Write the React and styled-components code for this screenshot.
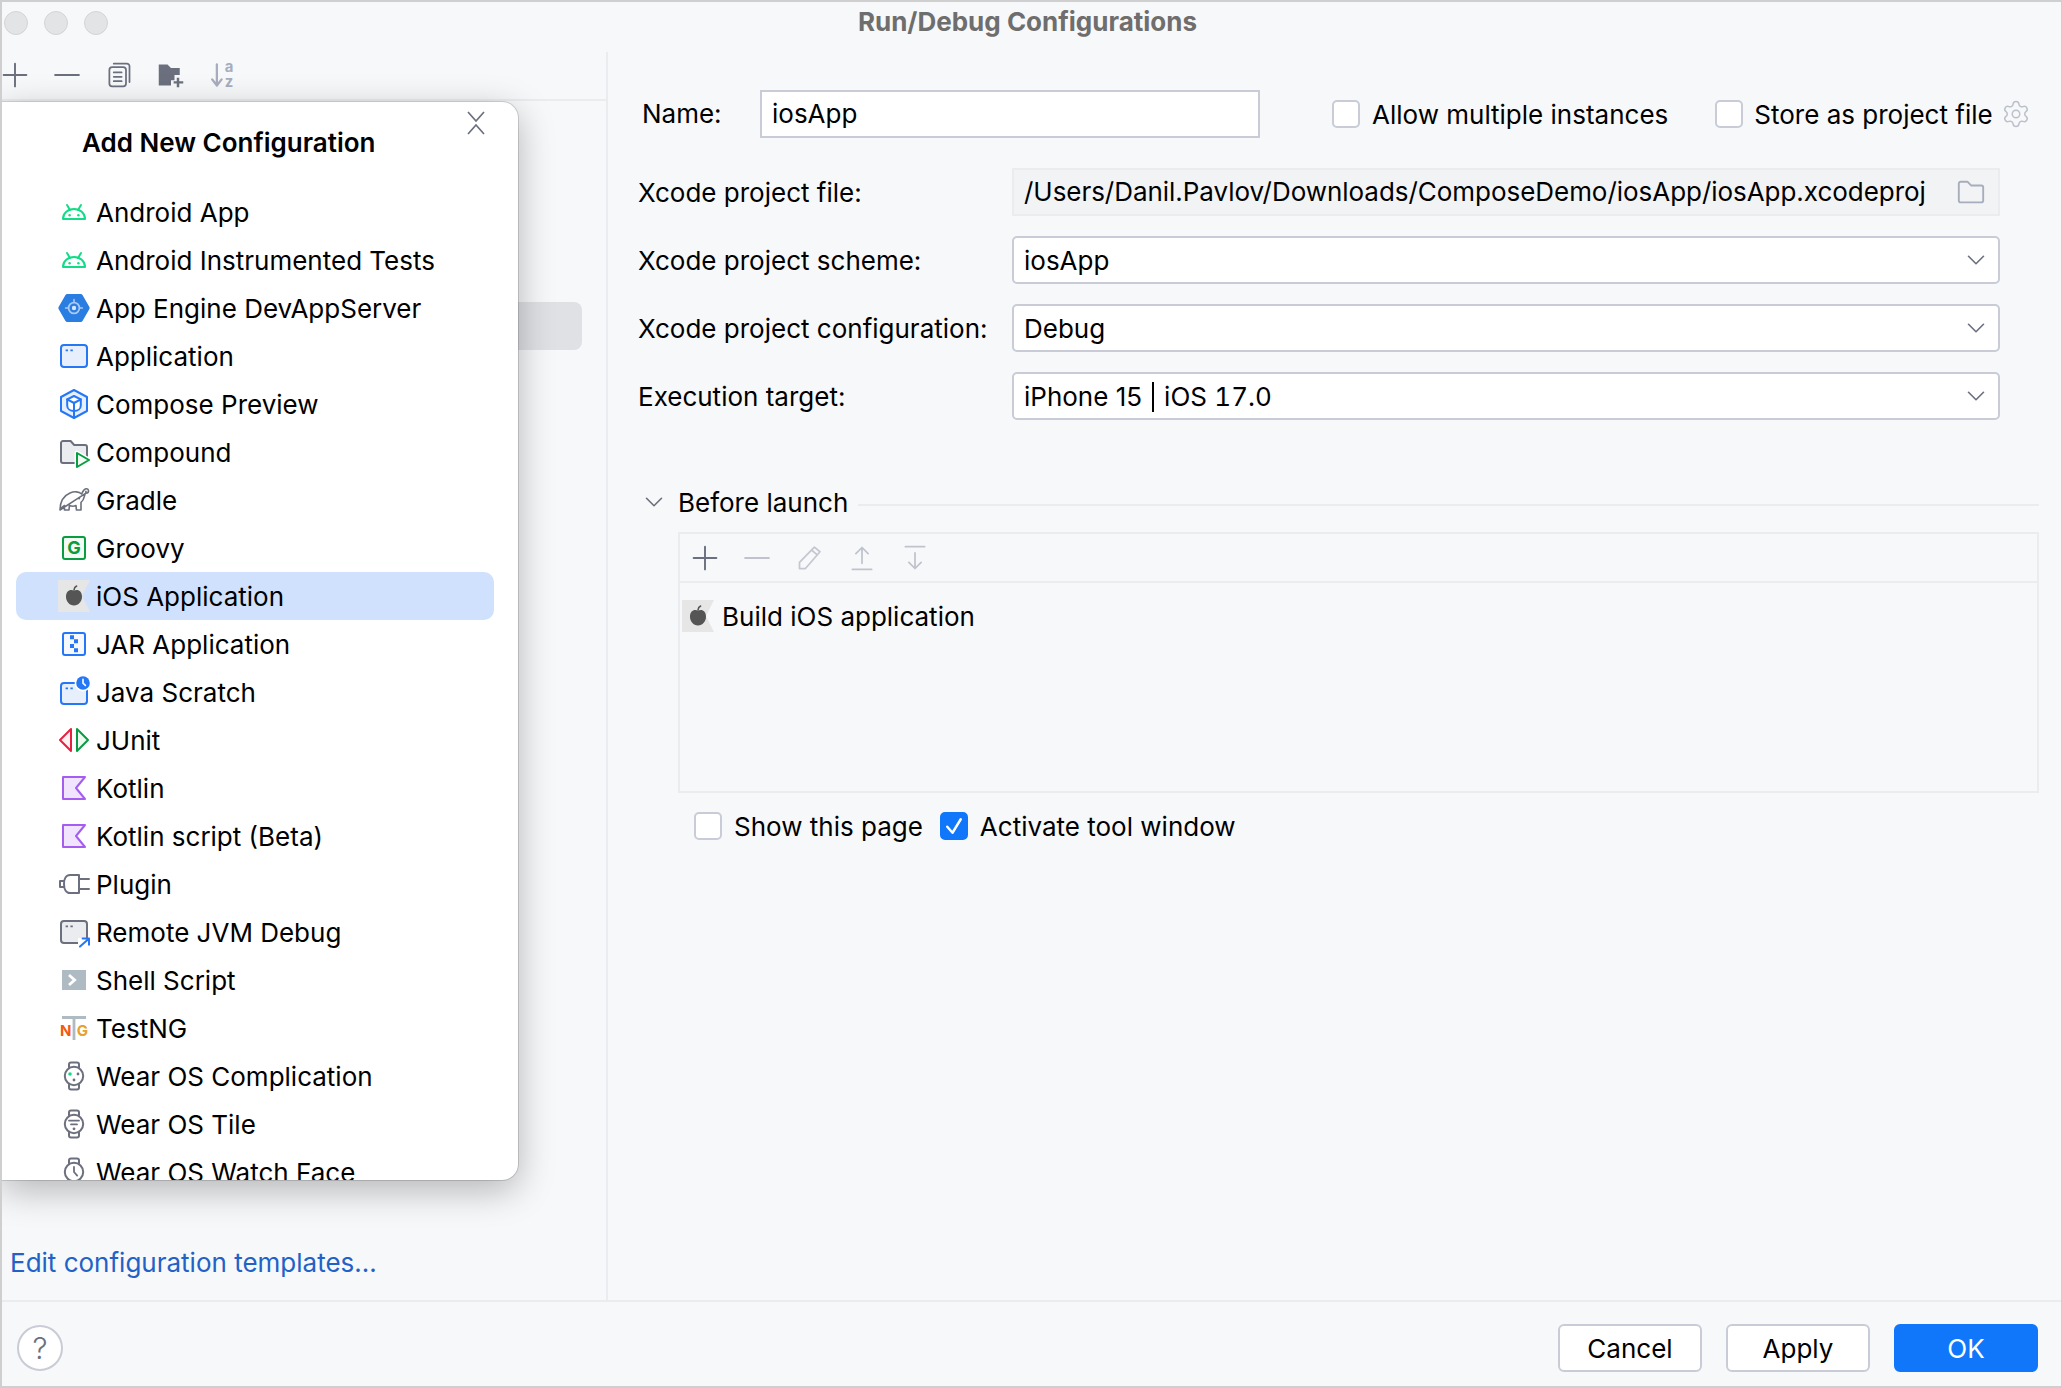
import React from 'react';
import styled, { createGlobalStyle } from 'styled-components';
import { Settings } from 'lucide-react';

const GlobalStyle = createGlobalStyle`
  html, body { margin: 0; padding: 0; background: #f7f8fa; }
  * { box-sizing: border-box; }
  body { font-family: Inter, "Noto Sans", sans-serif; font-size: 26px; color: #000; }
`;

const GRAY = '#6c707e';
const LIGHT = '#a8adbd';
const BLUE = '#2677f5';
const BLUE_FILL = '#e7effd';
const GREEN = '#0a9c43';
const PURPLE = '#a55df0';
const LINE = '#ebecf0';

const Window = styled.div`
  position: relative;
  width: 2062px;
  height: 1388px;
  display: flex;
  flex-direction: column;
  overflow: hidden;
  background: #f7f8fa;
  border: 2px solid #cfcfcf;
  border-right-width: 1px;
`;

const TitleBar = styled.div`
  flex: none;
  height: 40px;
  display: grid;
  grid-template-columns: 1fr auto 1fr;
  align-items: center;
  padding: 0 2px;
`;

const Lights = styled.div`
  display: flex;
  gap: 16px;
  margin-top: 2px;
`;

const Light = styled.span`
  width: 24px;
  height: 24px;
  border-radius: 50%;
  background: #e3e4e6;
  border: 1px solid #d3d4d6;
`;

const WindowTitle = styled.div`
  font-size: 26px;
  font-weight: 700;
  color: #6e6e6e;
  margin-top: -1px;
  margin-right: 8px;
`;

const Body = styled.div`
  flex: 1;
  display: flex;
  min-height: 0;
  padding-top: 10px;
`;

const Sidebar = styled.div`
  flex: none;
  width: 606px;
  display: flex;
  flex-direction: column;
  border-right: 2px solid ${LINE};
`;

const Toolbar = styled.div`
  flex: none;
  display: flex;
  align-items: center;
  gap: ${p => p.$gap || 24}px;
  height: 48px;
`;

const SideToolbar = styled(Toolbar)`
  height: 49px;
  border-bottom: 2px solid ${LINE};
  margin-left: -2px;
  padding: 0 0 1px 0.5px;
`;

const Tree = styled.div`
  flex: 1;
  padding: 201px 24px 0 0;
`;

const TreeSelection = styled.div`
  height: 48px;
  border-radius: 8px;
  background: #dfe1e5;
`;

const EditLink = styled.a`
  flex: none;
  display: block;
  padding: 0 0 21px 8px;
  color: #2261c6;
  line-height: 32px;
`;

const Popup = styled.div`
  position: absolute;
  z-index: 5;
  left: 0;
  top: 100px;
  width: 516px;
  height: 1078px;
  overflow: hidden;
  display: flex;
  flex-direction: column;
  background: #fff;
  border-radius: 0 16px 16px 0;
  box-shadow: 0 0 0 1px rgba(0, 0, 0, 0.14), 0 10px 36px rgba(0, 0, 0, 0.28);
`;

const PopupHeader = styled.div`
  flex: none;
  height: 86px;
  display: flex;
  justify-content: space-between;
  align-items: flex-start;
  padding: 8px 28px 0 80px;
`;

const PopupTitle = styled.div`
  font-size: 26px;
  font-weight: 600;
  line-height: 32px;
  margin-top: 17px;
`;

const ConfigList = styled.div`
  flex: 1;
  min-height: 0;
  padding: 0 24px 0 14px;
`;

const ConfigRow = styled.div`
  height: 48px;
  display: flex;
  align-items: center;
  gap: 6px;
  padding-left: 42px;
  border-radius: 10px;
  white-space: nowrap;
  background: ${p => (p.$selected ? '#d0e1fd' : 'transparent')};
`;

const Main = styled.div`
  flex: 1;
  min-width: 0;
  padding: 38px 22px 0 30px;
`;

const NameRow = styled.div`
  display: flex;
  align-items: center;
  height: 48px;
`;

const NameLabel = styled.label`
  width: 118px;
  margin-left: 4px;
  padding-bottom: 2px;
`;

const NameInput = styled.div`
  width: 500px;
  height: 48px;
  display: flex;
  align-items: center;
  padding: 0 0 2px 10px;
  background: #fff;
  border: 2px solid #c9ccd6;
`;

const CheckLine = styled.label`
  display: flex;
  align-items: center;
  gap: ${p => p.$gap || 12}px;
  margin-left: ${p => p.$left || 0}px;
  white-space: nowrap;
`;

const Box = styled.span`
  flex: none;
  width: 28px;
  height: 28px;
  display: flex;
  align-items: center;
  justify-content: center;
  border-radius: 5px;
  background: ${p => (p.$checked ? '#1077fb' : '#fff')};
  border: 2px solid ${p => (p.$checked ? '#1077fb' : '#c9ccd6')};
`;

const FieldGrid = styled.div`
  display: grid;
  grid-template-columns: 374px 988px;
  row-gap: 20px;
  align-items: center;
  margin-top: 30px;
`;

const Field = styled.div`
  height: 48px;
  display: flex;
  align-items: center;
  justify-content: space-between;
  padding: 0 12px 0 10px;
  white-space: nowrap;
  background: ${p => (p.$disabled ? '#f2f3f5' : '#fff')};
  border: 2px solid ${p => (p.$disabled ? LINE : '#c9ccd6')};
  border-radius: ${p => (p.$disabled ? 0 : 5)}px;
`;

const PathText = styled.span`
  margin-top: -2px;
  letter-spacing: -0.04px;
`;

const Version = styled.span`
  font-variant-numeric: tabular-nums;
`;

const Pipe = styled.span`
  display: inline-block;
  width: 2px;
  height: 30px;
  margin: 0 10px;
  background: #000;
  vertical-align: -6px;
`;

const SectionHead = styled.div`
  display: flex;
  align-items: center;
  height: 30px;
  margin-top: 67px;
  margin-left: 6px;
`;

const SectionLabel = styled.span`
  margin-left: 14px;
  margin-right: 10px;
  white-space: nowrap;
`;

const SectionLine = styled.span`
  flex: 1;
  height: 2px;
  margin-top: 6px;
  background: ${LINE};
`;

const TaskBox = styled.div`
  height: 261px;
  margin: 15px 0 0 40px;
  border: 2px solid ${LINE};
`;

const TaskBar = styled(Toolbar)`
  height: 49px;
  padding-left: 11px;
  border-bottom: 2px solid ${LINE};
`;

const TaskRow = styled.div`
  display: flex;
  align-items: center;
  gap: 8px;
  height: 48px;
  margin-top: 9px;
  padding-left: 2px;
`;

const OptionRow = styled.div`
  display: flex;
  align-items: center;
  margin: 19px 0 0 56px;
  height: 28px;
`;

const Footer = styled.div`
  flex: none;
  height: 86px;
  display: flex;
  align-items: center;
  justify-content: space-between;
  padding: 8px 23px 0 15px;
  border-top: 2px solid ${LINE};
`;

const HelpButton = styled.div`
  width: 46px;
  height: 46px;
  display: flex;
  align-items: center;
  justify-content: center;
  border-radius: 50%;
  font-size: 30px;
  font-weight: 300;
  color: ${GRAY};
  background: #fff;
  border: 2px solid #c9ccd6;
`;

const Buttons = styled.div`
  display: flex;
  gap: 24px;
`;

const Button = styled.button`
  width: 144px;
  height: 48px;
  padding: 0;
  font: inherit;
  color: ${p => (p.$primary ? '#fff' : '#000')};
  background: ${p => (p.$primary ? '#1077fb' : '#fff')};
  border: 2px solid ${p => (p.$primary ? '#1077fb' : '#c9ccd6')};
  border-radius: 6px;
`;

const Svg = styled.svg`
  flex: none;
  display: block;
  overflow: visible;
  width: ${p => p.$size || 32}px;
  height: ${p => p.$size || 32}px;
`;

const Icon = ({ size, children }) => (
  <Svg $size={size} viewBox="0 0 16 16" fill="none" strokeLinecap="round" strokeLinejoin="round">
    {children}
  </Svg>
);

const Plus = ({ color = GRAY }) => (
  <Icon size={28}>
    <path d="M8 1.500v13M1.500 8h13" stroke={color} strokeWidth="1.100" />
  </Icon>
);
const Minus = ({ color = GRAY }) => (
  <Icon size={28}>
    <path d="M1.200 8h13.600" stroke={color} strokeWidth="1.100" />
  </Icon>
);
const Copy = () => (
  <Icon size={28}>
    <rect x="2.500" y="3.500" width="9.500" height="11" rx="1.600" stroke={GRAY} strokeWidth="1" />
    <path d="M5 1.500h7.500A1.500 1.500 0 0 1 14 3v9" stroke={GRAY} strokeWidth="1" />
    <path d="M5 6.500h4.500M5 9h4.500M5 11.500h4.500" stroke={GRAY} strokeWidth="1" />
  </Icon>
);
const FolderAdd = () => (
  <Icon size={28}>
    <path d="M1 2h5l2 2h5v4H10v3H8v3H1z" fill={GRAY} />
    <path d="M12 9.500v5.500M9.500 12.200h5.500" stroke={GRAY} strokeWidth="1.400" strokeLinecap="butt" />
  </Icon>
);
const Sort = () => (
  <Icon size={28}>
    <path d="M4.500 2v11M1.800 10.500 4.500 14l2.700-3.500" stroke={LIGHT} strokeWidth="1.300" />
    <text x="9" y="6.500" fontFamily="Inter, sans-serif" fontSize="8.500" fontWeight="700" fill={LIGHT}>a</text>
    <text x="9" y="15" fontFamily="Inter, sans-serif" fontSize="8.500" fontWeight="700" fill={LIGHT}>z</text>
  </Icon>
);
const Pencil = () => (
  <Icon size={28}>
    <path d="M2 14v-3.500L10.500 1.800l3.200 2.600L5.400 14zM9 3.600l3.200 2.600" stroke="#c4c7d0" strokeWidth="1" />
  </Icon>
);
const MoveUp = () => (
  <Icon size={28}>
    <path d="M8 2v9M4.500 5.500 8 2l3.500 3.500M2.500 14.500h11" stroke="#c0c3cc" strokeWidth="1" />
  </Icon>
);
const MoveDown = () => (
  <Icon size={28}>
    <path d="M8 5v9M4.500 10.500 8 14l3.500-3.500M2.500 1.500h11" stroke="#c0c3cc" strokeWidth="1" />
  </Icon>
);
const Chevron = ({ size = 20, color = GRAY }) => (
  <Icon size={size}>
    <path d="M2 5l6 6 6-6" stroke={color} strokeWidth="1.300" />
  </Icon>
);
const CloseChevrons = () => (
  <Svg $size={28} viewBox="0 0 28 28" fill="none">
    <path d="M6 2l8 9 8-9M6 24l8-9 8 9" stroke={GRAY} strokeWidth="1.700" />
  </Svg>
);
const Folder = () => (
  <Icon size={30}>
    <path d="M1.500 3.500a1 1 0 0 1 1-1h3.600l1.900 2h5.500a1 1 0 0 1 1 1v7a1 1 0 0 1-1 1h-11a1 1 0 0 1-1-1z" stroke={LIGHT} strokeWidth="1" fill="#f2f3f5" />
  </Icon>
);
const Check = () => (
  <Icon size={24}>
    <path d="M3.500 8.500 7 12.500l5.500-9" stroke="#fff" strokeWidth="1.600" />
  </Icon>
);

const Android = () => (
  <Icon>
    <path d="M2.500 11.500h11C13.500 8.500 11 6.500 8 6.500s-5.500 2-5.500 5z" stroke="#12dc85" strokeWidth="1" />
    <path d="M4.500 4.500 6 7M11.500 4.500 10 7" stroke="#12dc85" strokeWidth="1" />
    <circle cx="5.800" cy="9.600" r=".6" fill="#12dc85" />
    <circle cx="10.200" cy="9.600" r=".6" fill="#12dc85" />
  </Icon>
);
const AppEngine = () => (
  <Icon>
    <path d="M4.600 1h6.800a1 1 0 0 1 .85.5L15.700 7.500a1 1 0 0 1 0 1L12.250 14.500a1 1 0 0 1-.85.5H4.600a1 1 0 0 1-.85-.5L.300 8.500a1 1 0 0 1 0-1L3.750 1.500A1 1 0 0 1 4.600 1z" fill="#2a7de1" />
    <circle cx="8" cy="8" r="2.700" stroke="#a9c9f7" strokeWidth=".9" />
    <circle cx="8" cy="8" r="1.100" fill="#d7e6fb" />
    <path d="M8 3.800v1.300M3.800 8h1.300M10.900 8h1.300" stroke="#a9c9f7" strokeWidth=".8" />
  </Icon>
);
const Application = () => (
  <Icon>
    <rect x="1.500" y="2.500" width="13" height="11" rx="1.500" fill={BLUE_FILL} stroke={BLUE} />
    <path d="M3.800 5.200h1.200M6.200 5.200h1.200" stroke={BLUE} strokeWidth=".9" strokeLinecap="butt" />
  </Icon>
);
const Compose = () => (
  <Icon>
    <path d="M8 1 14.500 4.500v7L8 15l-6.500-3.500v-7z" fill={BLUE_FILL} stroke={BLUE} />
    <path d="M4.600 5.700 8 4l3.400 1.700v3C11.400 10.500 9.800 11.500 8 11.500S4.600 10.500 4.600 8.700z" fill="#fff" stroke={BLUE} />
    <path d="M4.600 5.700 8 7.500l3.400-1.800M8 7.500V15" stroke={BLUE} />
  </Icon>
);
const Compound = () => (
  <Icon>
    <path d="M1.500 3.500a1 1 0 0 1 1-1h3.800l1.800 2h5.400a1 1 0 0 1 1 1v7a1 1 0 0 1-1 1h-11a1 1 0 0 1-1-1z" fill={LINE} stroke={GRAY} />
    <path d="M9.500 8.500 15.500 12l-6 3.500z" fill="#f2fcf3" stroke="#fff" strokeWidth="2.400" />
    <path d="M9.500 8.500 15.500 12l-6 3.500z" fill="#f2fcf3" stroke={GREEN} />
  </Icon>
);
const Gradle = () => (
  <Icon>
    <path d="M1 13C1 9.500 2.500 6 6 4.500c2-.9 4.500-.8 5.800.5.600-1 .8-2.400 2.200-2.600 1.400-.2 1.800 1.800.4 2.200-.5-.2-.6-.5-.4-.9M13.600 4.800c-.6 1.400-.4 3.200-2.100 4.400V13H9.200L9 10.800c-1.200.5-2.200.4-3.300 0L5.500 13H3.200l.1-2.200C2.800 10.600 2.200 11.500 1 13z" stroke={GRAY} strokeWidth=".8" />
    <circle cx="10.600" cy="7.200" r=".5" fill={GRAY} />
  </Icon>
);
const Groovy = () => (
  <Icon>
    <rect x="2.500" y="2.500" width="11" height="11" rx="1" fill="#f2fcf3" stroke={GREEN} />
    <text x="8" y="11.200" textAnchor="middle" fontFamily="Inter, sans-serif" fontSize="9" fontWeight="700" fill={GREEN}>G</text>
  </Icon>
);
const Apple = () => (
  <Icon>
    <path d="M0 0h16l-4 8 4 8H0z" fill="#e6e6e6" />
    <path d="M8 5.300c-2.300-.9-4 .6-4 3.100 0 2.400 1.700 4.300 4 4.300s4-1.900 4-4.300c0-2.500-1.700-4-4-3.100z" fill="#555" />
    <path d="M8 5c.1-1 .5-1.600 1.300-2" stroke="#555" strokeWidth=".8" />
  </Icon>
);
const Jar = () => (
  <Icon>
    <rect x="2.500" y="2.500" width="11" height="11" rx="1" fill="#f5f8fe" stroke={BLUE} />
    <path d="M6 3.600h2v2H6zM8 5.600h2v2H8zM6 8h2v2H6zM8 10.100h2v2H8z" fill={BLUE} />
  </Icon>
);
const Scratch = () => (
  <Icon>
    <rect x="1.500" y="3.500" width="13" height="10.500" rx="1.500" fill={BLUE_FILL} stroke={BLUE} />
    <path d="M3.800 6.200h1.200M6.200 6.200h1.200" stroke={BLUE} strokeWidth=".9" strokeLinecap="butt" />
    <circle cx="12.500" cy="3.500" r="4.200" fill="#fff" />
    <circle cx="12.500" cy="3.500" r="3.400" fill={BLUE} />
    <path d="M12.500 1.700v1.900l1.200 1.100" stroke="#fff" strokeWidth=".8" />
  </Icon>
);
const JUnit = () => (
  <Icon>
    <path d="M6.500 2.500v11L1 8z" fill="#fff0f2" stroke="#e5213f" />
    <path d="M9.500 2.500v11L15 8z" fill="#edfaf0" stroke={GREEN} />
  </Icon>
);
const Kotlin = () => (
  <Icon>
    <path d="M2.500 2.500h11L9 8l4.500 5.500h-11z" fill="#f1e4ff" stroke={PURPLE} />
  </Icon>
);
const Plug = () => (
  <Icon>
    <path d="M6 3.500h4.500v9H6C4 12.500 3 10.500 3 8s1-4.500 3-4.500zM3 6.500H1v3h2M10.500 5.500h5M10.500 10.500h5" stroke={GRAY} />
  </Icon>
);
const Remote = () => (
  <Icon>
    <rect x="1.500" y="2.500" width="13" height="11" rx="1.500" fill={LINE} stroke={GRAY} />
    <path d="M3.800 5.200h1.200M6.200 5.200h1.200" stroke={GRAY} strokeWidth=".9" strokeLinecap="butt" />
    <rect x="10" y="11" width="6" height="5" fill="#fff" />
    <path d="M11 15.300 15.300 11.500M12.300 11.200h3.200v3.200" stroke={BLUE} />
  </Icon>
);
const Shell = () => (
  <Icon>
    <rect x="2" y="3" width="12" height="10" fill="#afbbc2" />
    <path d="M5.500 5.500 8.300 8l-2.800 2.500" stroke="#fff" strokeWidth="1.400" strokeLinecap="butt" strokeLinejoin="miter" />
  </Icon>
);
const TestNg = () => (
  <Icon>
    <path d="M2 2h12v1.500H8.700V14H7.300V3.500H2z" fill="#afbbc2" />
    <text x="3.800" y="12" textAnchor="middle" fontFamily="Inter, sans-serif" fontSize="7.500" fontWeight="700" fill="#f4590f">N</text>
    <text x="12.200" y="12" textAnchor="middle" fontFamily="Inter, sans-serif" fontSize="7.500" fontWeight="700" fill="#e8a030">G</text>
  </Icon>
);
const Watch = ({ children }) => (
  <Icon>
    <circle cx="8" cy="8" r="4.600" stroke={GRAY} />
    <path d="M5.500 3.800V2.200a1 1 0 0 1 1-1h3a1 1 0 0 1 1 1v1.600M5.500 12.200v1.600a1 1 0 0 0 1 1h3a1 1 0 0 0 1-1v-1.600" stroke={GRAY} />
    {children}
  </Icon>
);
const WearComplication = () => (
  <Watch>
    <circle cx="6" cy="7" r=".9" fill="#12dc85" />
    <circle cx="10" cy="7" r=".7" fill={GRAY} />
    <circle cx="8" cy="10" r=".7" fill={GRAY} />
  </Watch>
);
const WearTile = () => (
  <Watch>
    <path d="M5.500 6.300h5M6.500 8.200h3" stroke={GRAY} strokeWidth=".9" />
    <circle cx="8" cy="10.400" r=".7" fill={GRAY} />
  </Watch>
);
const WearFace = () => (
  <Watch>
    <path d="M8 5.500V8l1.600 1.800" stroke={GRAY} strokeWidth=".9" />
  </Watch>
);

const configs = [
  ['Android App', Android],
  ['Android Instrumented Tests', Android],
  ['App Engine DevAppServer', AppEngine],
  ['Application', Application],
  ['Compose Preview', Compose],
  ['Compound', Compound],
  ['Gradle', Gradle],
  ['Groovy', Groovy],
  ['iOS Application', Apple],
  ['JAR Application', Jar],
  ['Java Scratch', Scratch],
  ['JUnit', JUnit],
  ['Kotlin', Kotlin],
  ['Kotlin script (Beta)', Kotlin],
  ['Plugin', Plug],
  ['Remote JVM Debug', Remote],
  ['Shell Script', Shell],
  ['TestNG', TestNg],
  ['Wear OS Complication', WearComplication],
  ['Wear OS Tile', WearTile],
  ['Wear OS Watch Face', WearFace],
];

const App = () => (
  <Window>
    <GlobalStyle />
    <TitleBar>
      <Lights>
        <Light />
        <Light />
        <Light />
      </Lights>
      <WindowTitle>Run/Debug Configurations</WindowTitle>
    </TitleBar>
    <Body>
      <Sidebar>
        <SideToolbar>
          <Plus />
          <Minus />
          <Copy />
          <FolderAdd />
          <Sort />
        </SideToolbar>
        <Tree>
          <TreeSelection />
        </Tree>
        <EditLink>Edit configuration templates...</EditLink>
      </Sidebar>
      <Main>
        <NameRow>
          <NameLabel>Name:</NameLabel>
          <NameInput>iosApp</NameInput>
          <CheckLine $left={72}>
            <Box />
            Allow multiple instances
          </CheckLine>
          <CheckLine $left={47} $gap={11}>
            <Box />
            Store as project file
          </CheckLine>
          <Settings size={30} color="#bcc0ca" strokeWidth={1.2} style={{ marginLeft: 8 }} />
        </NameRow>
        <FieldGrid>
          <label>Xcode project file:</label>
          <Field $disabled>
            <PathText>/Users/Danil.Pavlov/Downloads/ComposeDemo/iosApp/iosApp.xcodeproj</PathText>
            <Folder />
          </Field>
          <label>Xcode project scheme:</label>
          <Field>
            iosApp
            <Chevron />
          </Field>
          <label>Xcode project configuration:</label>
          <Field>
            Debug
            <Chevron />
          </Field>
          <label>Execution target:</label>
          <Field>
            <span>
              iPhone 15
              <Pipe />
              iOS <Version>17.0</Version>
            </span>
            <Chevron />
          </Field>
        </FieldGrid>
        <SectionHead>
          <Chevron />
          <SectionLabel>Before launch</SectionLabel>
          <SectionLine />
        </SectionHead>
        <TaskBox>
          <TaskBar $gap={24.4}>
            <Plus />
            <Minus color="#c0c3cc" />
            <Pencil />
            <MoveUp />
            <MoveDown />
          </TaskBar>
          <TaskRow>
            <Apple />
            Build iOS application
          </TaskRow>
        </TaskBox>
        <OptionRow>
          <CheckLine>
            <Box />
            Show this page
          </CheckLine>
          <CheckLine $left={17}>
            <Box $checked>
              <Check />
            </Box>
            Activate tool window
          </CheckLine>
        </OptionRow>
      </Main>
    </Body>
    <Footer>
      <HelpButton>?</HelpButton>
      <Buttons>
        <Button>Cancel</Button>
        <Button>Apply</Button>
        <Button $primary>OK</Button>
      </Buttons>
    </Footer>
    <Popup>
      <PopupHeader>
        <PopupTitle>Add New Configuration</PopupTitle>
        <CloseChevrons />
      </PopupHeader>
      <ConfigList>
        {configs.map(([label, Glyph]) => (
          <ConfigRow key={label} $selected={label === 'iOS Application'}>
            <Glyph />
            {label}
          </ConfigRow>
        ))}
      </ConfigList>
    </Popup>
  </Window>
);

export default App;
